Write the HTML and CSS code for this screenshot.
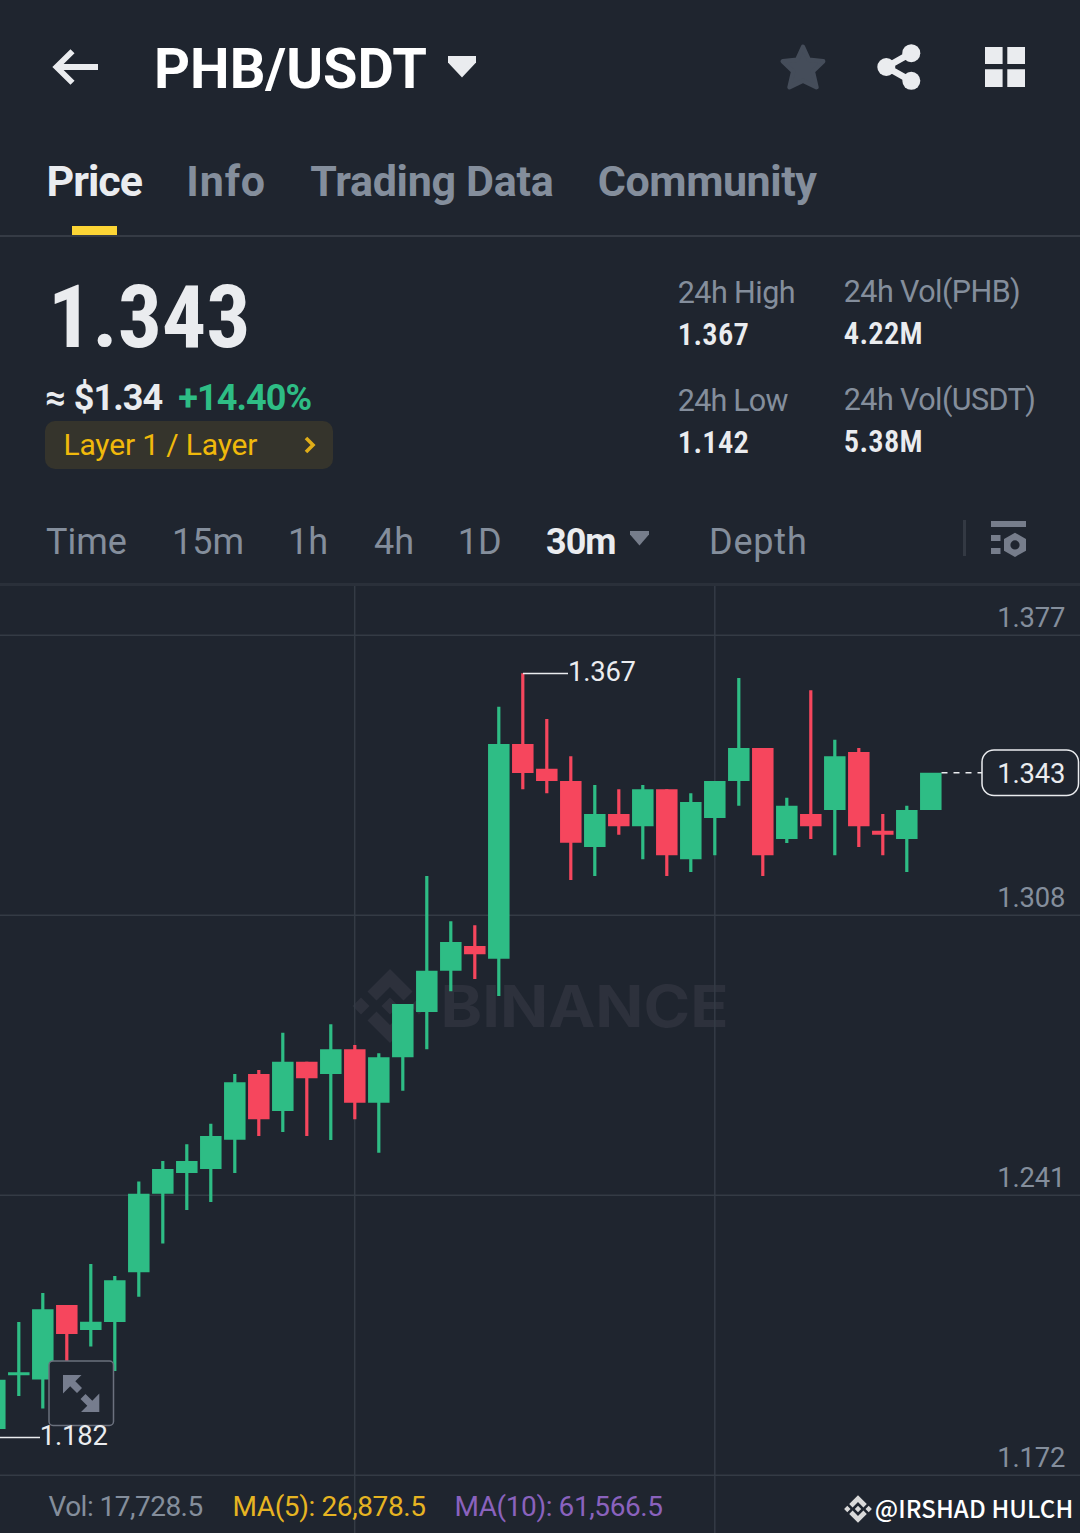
FILE: index.html
```html
<!DOCTYPE html>
<html lang="en">
<head>
<meta charset="utf-8">
<title>PHB/USDT</title>
<link rel="stylesheet" href="styles.css">
</head>
<body>
<header class="topbar">
  <svg class="back" width="46" height="36" viewBox="0 0 46 36"><path d="M46 18H5M20.500 2.200L4.500 18l16 15.800" fill="none" stroke="#eaecef" stroke-width="5.800"/></svg>
  <h1 class="pair">PHB/USDT</h1>
  <svg class="pair-caret" width="28" height="22" viewBox="0 0 28 22"><path d="M0 0h28v6.500L14 21.500 0 6.500z" fill="#eaecef"/></svg>
  <svg class="star" width="46" height="46" viewBox="0 0 46 46"><path d="M23 2.800l5.900 13 14.300 1.500L32.800 27.300l3.700 15.900L23 36.700 9.500 43.200l3.700-15.900L2.800 17.300l14.300-1.500z" fill="#454d5a" stroke="#454d5a" stroke-width="4.400" stroke-linejoin="round"/></svg>
  <svg class="share" width="44" height="46" viewBox="0 0 44 46"><g fill="#eaecef"><circle cx="9.300" cy="23" r="9"/><circle cx="34.300" cy="9.200" r="9"/><circle cx="34.300" cy="36.800" r="9"/></g><path d="M34 9.200L9.500 23 34 36.800" fill="none" stroke="#eaecef" stroke-width="6.500"/></svg>
  <svg class="apps" width="40" height="40" viewBox="0 0 40 40"><path d="M0 0h17.600v17H0zM22.300 0H40v17H22.300zM0 22.300h17.600V40H0zM22.300 22.300H40V40H22.300z" fill="#eaecef"/></svg>
</header>

<nav class="tabs">
  <a class="tab tab-active">Price<span class="tab-bar"></span></a>
  <a class="tab tab-info">Info</a>
  <a class="tab tab-data">Trading Data</a>
  <a class="tab tab-community">Community</a>
</nav>

<section class="summary">
  <div class="quote">
    <div class="last">1.343</div>
    <div class="change"><span class="approx">≈</span><span class="fiat">$1.34</span><span class="percent">+14.40%</span></div>
    <div class="tag"><span>Layer 1 / Layer</span><svg width="12" height="18" viewBox="0 0 12 18"><path d="M2 2l7 7-7 7" fill="none" stroke="#e0ad18" stroke-width="3.600"/></svg></div>
  </div>
  <dl class="stats stats-price">
    <dt>24h High</dt><dd>1.367</dd>
    <dt class="low">24h Low</dt><dd>1.142</dd>
  </dl>
  <dl class="stats stats-volume">
    <dt>24h Vol(PHB)</dt><dd>4.22M</dd>
    <dt>24h Vol(USDT)</dt><dd>5.38M</dd>
  </dl>
</section>

<nav class="intervals">
  <span>Time</span><span>15m</span><span>1h</span><span>4h</span><span>1D</span>
  <span class="current">30m<svg width="19" height="15" viewBox="0 0 19 15"><path d="M0 0h19v3.500L9.500 14.500 0 3.500z" fill="#767d8b"/></svg></span>
  <span class="depth">Depth</span>
  <i class="divider"></i>
  <svg class="settings" width="35" height="37" viewBox="0 0 35 37"><g fill="#767d8b"><path d="M0 1h35v6H0zM0 15h9.500v6H0zM0 28h9.500v6H0z"/><path fill-rule="evenodd" d="M24 12.800l11 6.200v11.700L24 36.900l-11-6.200V19zM24 20.300a4.600 4.600 0 1 0 0 9.200 4.600 4.600 0 1 0 0-9.200z"/></g></svg>
</nav>

<svg class="chart" width="1080" height="950" viewBox="0 583 1080 950">
  <g class="brand">
    <path d="M390 969l22.500 22.500-9 9L390 987l-13.500 13.500-9-9zM390 1043l22.500-22.500-9-9L390 1025l-13.500-13.500-9 9zM361 997.500l8.500 8.500-8.500 8.500-8.500-8.500zM419 997.500l8.500 8.500-8.500 8.500-8.500-8.500zM390 997.500l8.500 8.500-8.500 8.500-8.500-8.500z"/>
    <text x="440.500" y="1026.500" textLength="288" lengthAdjust="spacingAndGlyphs">BINANCE</text>
  </g>

  <path class="edge" d="M0 584.500H1080"/>
  <g class="grid"><path d="M0 635.300H1080M0 915.300H1080M0 1195.300H1080M0 1475.300H1080M354.700 586V1533M714.800 586V1533"/></g>

  <g transform="translate(-.2 0)">
    <path class="up wick" d="M19 1322V1396M43 1293V1408.500M91 1264V1346.500M115 1276V1371M139 1181.500V1296.800M163 1161V1243.400M187 1144.300V1210M211 1123.700V1202M235 1074V1173M283 1032.700V1132M331 1024.300V1140M379 1053.300V1152.700M403 1004V1090.700M427 876V1049.300M451 921.300V991.300M499 706.700V996M595 785V876M643 785V859.300M691 793.300V872M715 781V855.300M739 678V805.700M787 797.700V843M835 739.700V855.300M907 805.700V872"/>
    <path class="down wick" d="M67 1305V1375M259 1070V1136M307 1061.700V1136M355 1045V1119.300M475 925.300V979M523 673.300V789.300M547 719V793.300M571 756.300V880M619 789.300V834.700M667 789.300V876M763 748V876M811 690.300V839M859 748V847M883 814V855.300"/>
    <path class="up body" d="M-5 1379.700V1429M19 1372.300V1375.300M43 1309.300V1379.500M91 1321.700V1330M115 1280.300V1322M139 1193.700V1272.200M163 1169V1193.700M187 1161V1173M211 1136V1169M235 1082.300V1139.700M283 1061.700V1111M331 1049.300V1074M379 1057.300V1102.700M403 1004V1057.300M427 970.700V1012M451 942V970.700M499 744V958.700M595 814V847M643 789.300V826.300M691 802V859.300M715 781V818M739 748V781M787 805.700V839M835 756.300V810M907 810V839M931 772.700V810"/>
    <path class="down body" d="M67 1305V1334M259 1074V1119.300M307 1061.700V1078.300M355 1049.300V1102.700M475 946V954.300M523 744V773M547 768.700V781M571 781V842.700M619 814V826.300M667 789.300V855.300M763 748V855.300M811 814V826.300M859 752V826.300M883 830.700V834.700"/>
  </g>

  <path class="leader" d="M523 673.500H568M0 1437.500H40"/>
  <text class="mark" x="568" y="681" textLength="68">1.367</text>
  <path class="dash" d="M941.500 772.700H982"/>
  <rect class="price-box" x="982" y="750" width="96.500" height="45.500" rx="12"/>
  <text class="mark" x="997.300" y="782.800" textLength="68">1.343</text>

  <g class="axis">
    <text x="997.300" y="626.700" textLength="68">1.377</text>
    <text x="997.300" y="906.700" textLength="68">1.308</text>
    <text x="997.300" y="1186.700" textLength="68">1.241</text>
    <text x="997.300" y="1466.700" textLength="68">1.172</text>
  </g>

  <rect class="expand" x="49" y="1361" width="64.500" height="64.500" rx="4"/>
  <path class="expand-arrows" d="M63 1375h18.500l-6.200 6.200 6.700 6.800-5 5-6.800-6.700-7.200 7.200zM99.300 1412H81l6.300-6.300-6.800-6.700 5-5 6.800 6.700 7-7.200z"/>
  <text class="mark" x="39.800" y="1444.700" textLength="68">1.182</text>

  <g class="legend">
    <text class="vol" x="48.500" y="1515.800" textLength="154.700">Vol: 17,728.5</text>
    <text class="ma5" x="232.500" y="1515.800" textLength="193.500">MA(5): 26,878.5</text>
    <text class="ma10" x="454.500" y="1515.800" textLength="208.500">MA(10): 61,566.5</text>
  </g>

  <path class="author-logo" d="M858 1495.300l8.800 8.800-3.400 3.400-5.400-5.400-5.400 5.400-3.400-3.400zM858 1522.700l8.800-8.800-3.400-3.400-5.400 5.400-5.400-5.400-3.400 3.400zM847.300 1505.800l3.200 3.200-3.200 3.200-3.200-3.200zM868.700 1505.800l3.200 3.200-3.200 3.200-3.200-3.200zM858 1505.800l3.200 3.200-3.200 3.200-3.200-3.200z"/>
  <text class="author" x="874.700" y="1517.700" textLength="198.500">@IRSHAD HULCH</text>
</svg>
</body>
</html>
```
FILE: styles.css
```css
* { box-sizing: border-box; }

body {
  margin: 0;
  width: 1080px;
  background: #1f252f;
  color: #eaecef;
  font-family: Roboto, sans-serif;
}

svg { display: block; flex: none; }

.topbar {
  display: flex;
  align-items: center;
  height: 134px;
  padding: 0 55px 0 52px;
}
.pair {
  margin: 4px 0 0 56px;
  font-size: 56px;
  line-height: 66px;
  font-weight: 700;
  color: #fff;
}
.pair-caret { margin-left: 21px; }
.star { margin-left: auto; }
.share { margin-left: 51px; }
.apps { margin-left: 64px; }

.tabs {
  display: flex;
  gap: 44.400px;
  height: 103px;
  padding: 2px 0 0 46.500px;
  border-bottom: 2px solid #353b45;
}
.tab {
  display: flex;
  flex-direction: column;
  align-items: center;
  font-size: 43px;
  line-height: 90px;
  font-weight: 700;
  color: #848e9c;
  white-space: nowrap;
}
.tab-active { color: #eaecef; letter-spacing: -1px; }
.tab-info { letter-spacing: .8px; }
.tab-data { letter-spacing: -.3px; }
.tab-community { letter-spacing: -.45px; }
.tab-bar { width: 45px; height: 9px; background: #fcd535; }

.summary {
  display: grid;
  grid-template-columns: 632.800px 166px 1fr;
  height: 263px;
  padding-left: 45px;
}
.quote { padding-top: 33px; }
.last {
  padding-left: 3px;
  font-family: "Roboto Condensed", Roboto, sans-serif;
  font-size: 87.600px;
  line-height: 95px;
  font-weight: 700;
}
.change {
  display: flex;
  margin-top: 10px;
  font-size: 36px;
  line-height: 46px;
  font-weight: 700;
  letter-spacing: -.9px;
}
.approx { width: 28.700px; }
.fiat { width: 104.500px; }
.percent { color: #2ebd85; }
.tag {
  display: flex;
  align-items: center;
  justify-content: space-between;
  width: 288px;
  height: 48px;
  padding: 0 17.500px 0 18.400px;
  border-radius: 10px;
  background: #35342c;
  color: #f0b90b;
  font-size: 30px;
  line-height: 46px;
  letter-spacing: -.15px;
}
.stats {
  margin: 0;
  font-size: 30.500px;
  line-height: 42px;
  white-space: nowrap;
}
.stats-price { padding-top: 34.600px; }
.stats-volume { padding-top: 33.600px; }
.stats dt { color: #848e9c; letter-spacing: -.58px; }
.stats .low { letter-spacing: -.8px; }
.stats dd {
  margin: 0 0 24px;
  font-family: "Roboto Condensed", Roboto, sans-serif;
  font-weight: 600;
  letter-spacing: .25px;
}

.intervals {
  display: grid;
  grid-template-columns: 126.100px 116px 86px 83.600px 88.300px 163px 254px 28px 35px;
  align-items: center;
  height: 83px;
  padding-left: 46px;
  color: #848e9c;
  font-size: 36px;
}
.current {
  display: flex;
  align-items: center;
  gap: 15px;
  color: #eaecef;
  font-weight: 700;
  letter-spacing: -1px;
}
.current svg { margin-top: -6px; }
.depth { letter-spacing: .8px; }
.divider { width: 3px; height: 36px; margin-top: -7px; background: #333943; }
.settings { margin-top: -7px; }

.edge { stroke: #2a303a; stroke-width: 3; }
.grid { fill: none; stroke: #343b45; stroke-width: 1.500; }
.brand { fill: #2d313c; }
.brand text { font: 700 57.500px Inter, sans-serif; }
.wick { stroke-width: 3.200; }
.body { stroke-width: 21.500; }
.up { stroke: #2ebd85; }
.down { stroke: #f6465d; }
.leader { stroke: #eaecef; stroke-width: 1.500; }
.dash { stroke: #eaecef; stroke-width: 1.500; stroke-dasharray: 6; }
.price-box { fill: #1f252f; stroke: #eaecef; stroke-width: 1.500; }
.chart text { white-space: pre; }
.mark { fill: #eaecef; font-size: 27.400px; }
.axis { fill: #848e9c; font-size: 27.400px; }
.expand { fill: #1f252f; stroke: #6b717e; stroke-width: 1.500; }
.expand-arrows { fill: #767d8e; }
.legend { font-size: 28px; }
.vol { fill: #848e9c; }
.ma5 { fill: #e6b422; }
.ma10 { fill: #8a62bd; }
.author-logo { fill: #d9d9d9; }
.author { fill: #fff; font: 500 24px "Noto Sans CJK SC", sans-serif; }
```
